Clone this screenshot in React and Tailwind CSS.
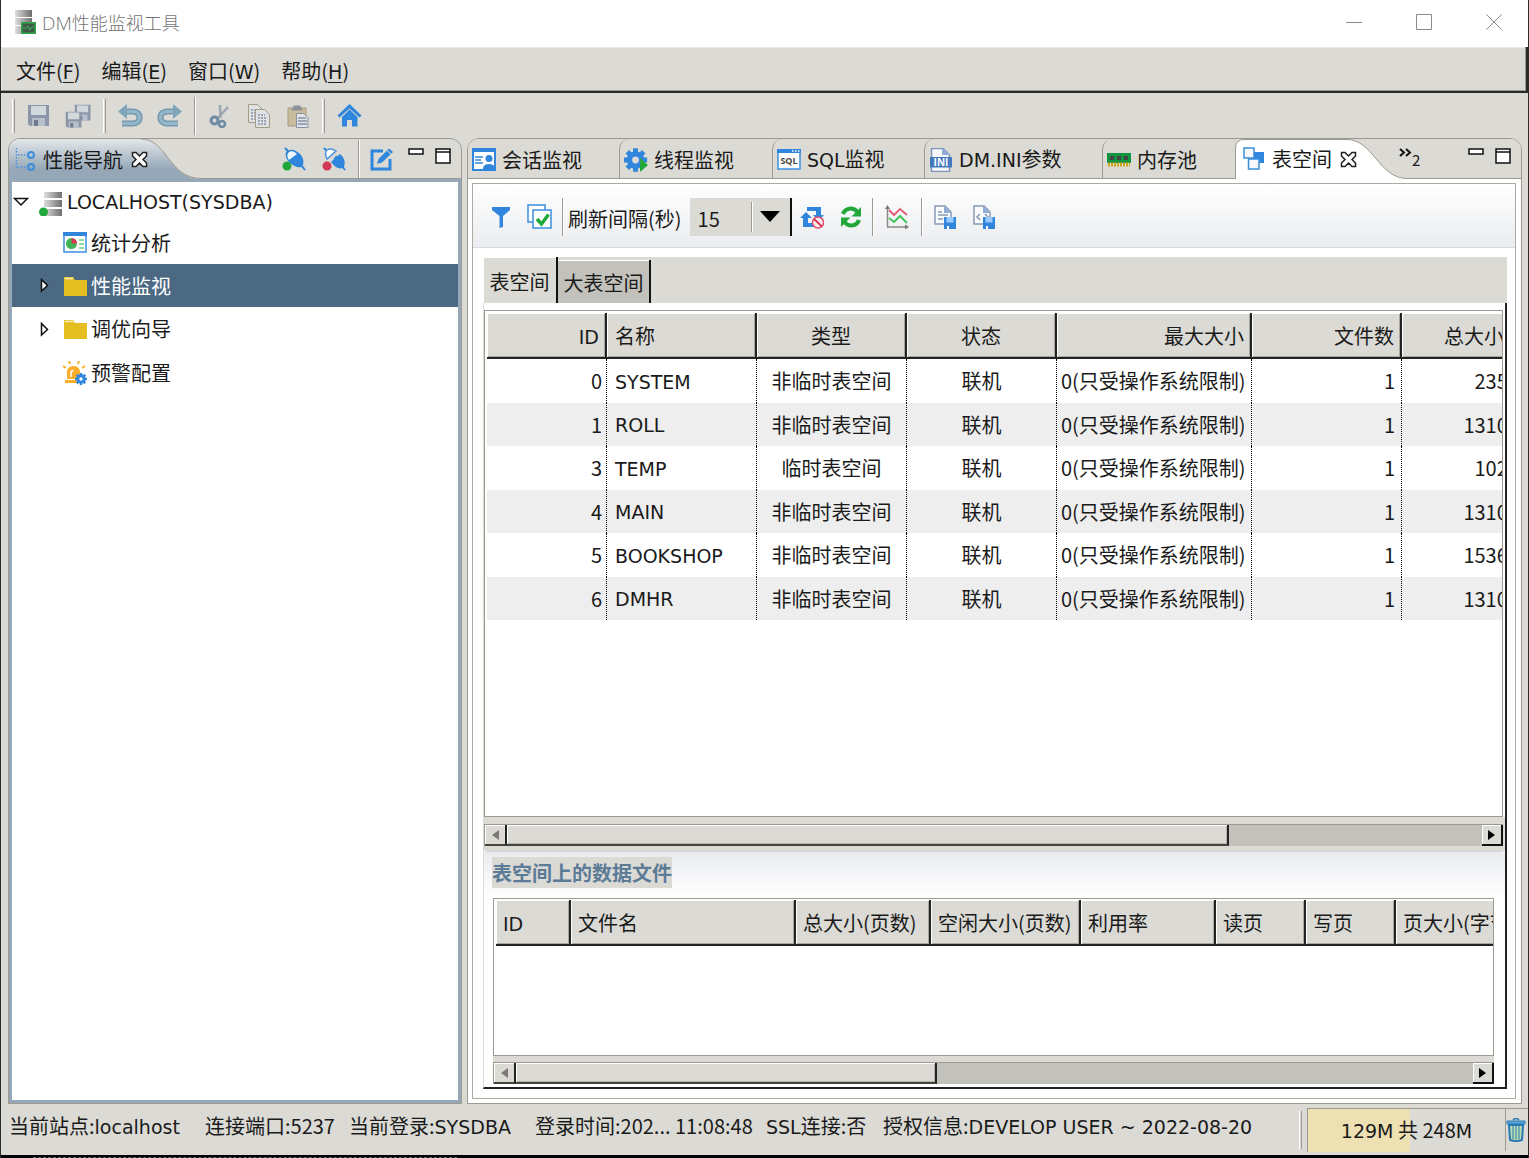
import React from "react";

const L = ({ children }) => (
  <span className="font-['DejaVu_Sans',sans-serif] text-[19px]">{children}</span>
);

const Svg = ({ w = 24, h = 24, children }) => (
  <svg width={w} height={h} viewBox={`0 0 ${w} ${h}`} fill="none" className="block shrink-0" aria-hidden="true">
    {children}
  </svg>
);

/* ---------- application icons ---------- */
const AppIcon = () => (
  <Svg>
    <defs>
      <linearGradient id="srv" x1="0" x2="1">
        <stop offset="0" stopColor="#dedede" />
        <stop offset="1" stopColor="#6e6e6e" />
      </linearGradient>
    </defs>
    <path d="M1 0H18V7H1zM1 8H18V15H1zM1 16H18V24H1z" fill="url(#srv)" />
    <path d="M7 12H22V24H7z" fill="#2fa84a" />
    <path d="M8.500 13.500H20.500V22.500H8.500z" fill="#3f5a46" />
    <path d="M9 18h3l2-2 2 4 2-3h2" stroke="#3dbb5b" />
  </Svg>
);
const Server = () => (
  <Svg>
    <path d="M5 0H23V6H5zM5 8H23V15H5zM5 17H23V24H5z" fill="url(#srv)" />
    <circle cx="4.500" cy="20" r="4.500" fill="#22a83a" />
  </Svg>
);
const Floppy = ({ x = 0, y = 0, s = 1 }) => (
  <g transform={`translate(${x} ${y}) scale(${s})`}>
    <path d="M1 1H22V22H3L1 20z" fill="#8b97a8" />
    <path d="M4 2H19V11H4z" fill="#d3d8dc" />
    <path d="M5 14H18V22H5z" fill="#b6bfca" />
    <path d="M7 16H11V22H7z" fill="#6d7a90" />
  </g>
);
const Save = () => <Svg><Floppy /></Svg>;
const SaveAll = () => (
  <Svg w={26}>
    <Floppy x={9} y={0} s={0.75} />
    <Floppy x={0} y={7} s={0.75} />
  </Svg>
);
const UndoShape = () => (
  <>
    <path d="M7 7.500H14C18.500 7.500 21.500 9.500 21.500 13.500C21.500 17.500 18.500 19.500 15 19.500H4" stroke="#6f94ab" strokeWidth="6" />
    <path d="M7 7.500H14C18.500 7.500 21.500 9.500 21.500 13.500C21.500 17.500 18.500 19.500 15 19.500H4" stroke="#94b6c8" strokeWidth="3.500" />
    <path d="M0 7.500L9 0V15z" fill="#7fa4b9" />
  </>
);
const Undo = () => <Svg w={25}><UndoShape /></Svg>;
const Redo = () => (
  <Svg w={25}>
    <g transform="translate(25 0) scale(-1 1)"><UndoShape /></g>
  </Svg>
);
const Cut = () => (
  <Svg>
    <path d="M12 1L12.500 14M20 3L9 15" stroke="#9aa7b2" strokeWidth="2.500" />
    <circle cx="6.500" cy="16.500" r="3.500" stroke="#6f8ba3" strokeWidth="3" />
    <circle cx="14" cy="20" r="3" stroke="#6f8ba3" strokeWidth="2.500" />
  </Svg>
);
const Page = ({ x, y }) => (
  <g transform={`translate(${x} ${y})`}>
    <path d="M.5.5H9.500L14.500 5.500V18.500H.5z" fill="#dfe1e2" stroke="#a39c86" />
    <path d="M3 6h7M3 9h9M3 12h9M3 15h9" stroke="#8793ab" strokeWidth="1.500" strokeDasharray="2 1" />
  </g>
);
const Copy = () => <Svg><Page x={1} y={0} /><Page x={8} y={5} /></Svg>;
const Paste = () => (
  <Svg>
    <path d="M2 4H20V22H2z" fill="#c9bda0" stroke="#a99a7b" />
    <path d="M5 6.500L8 1.500H14L17 6.500z" fill="#8d929b" />
    <path d="M10.500 9.500H18L22 13.500V23.500H10.500z" fill="#e2e3e4" stroke="#8a93a5" />
    <path d="M12 14h8M12 17h9M12 20h9" stroke="#8793ab" strokeWidth="1.500" />
  </Svg>
);
const Home = () => (
  <Svg w={25}>
    <path d="M12.500 0L24.500 11.500L22.500 13.500L12.500 4.500L2.500 13.500L.5 11.500z" fill="#2f86dc" />
    <path d="M12.500 5.500L20.500 13V22.500H15V16H10V22.500H5V13z" fill="#2f86dc" />
  </Svg>
);
const NavIcon = () => (
  <Svg w={22}>
    <path d="M1.500 0V21M3 7H11M3 19H11" stroke="#4a94dc" strokeWidth="1.500" strokeDasharray="1.500 1.500" />
    <circle cx="16" cy="7" r="3" stroke="#3a8ede" strokeWidth="2" />
    <circle cx="16" cy="19" r="3" stroke="#3a8ede" strokeWidth="2" />
  </Svg>
);
const CloseX = () => (
  <Svg w={17} h={17}>
    <path d="M1.500 1.500H5L8.500 5L12 1.500H15.500V5L12 8.500L15.500 12V15.500H12L8.500 12L5 15.500H1.500V12L5 8.500L1.500 5z" fill="#fff" stroke="#222" strokeWidth="1.500" />
  </Svg>
);
const Connect = () => (
  <Svg>
    <path d="M3 1L6 4M20 19L23 23" stroke="#2f86dc" strokeWidth="2" />
    <path d="M4 5C9 1 14 3 19 8C22 12 22 17 20 20C15 21 11 19 7 15C4 12 3 8 4 5z" fill="#2f86dc" />
    <path d="M6 6C9 3 12 4 15 7L7 13C5 11 5 8 6 6z" fill="#eef5fc" />
    <circle cx="5" cy="19" r="4.500" fill="#22a83a" />
  </Svg>
);
const Disconnect = () => (
  <Svg>
    <path d="M2 1L5 4M20 19L23 23" stroke="#2f86dc" strokeWidth="2" />
    <path d="M5 12C3 8 3 5 5 3C8 1 11 2 14 4z" fill="#fff" stroke="#4a94dc" strokeWidth="1.500" />
    <path d="M10 15L18 8C22 11 23 16 21 20C17 22 13 19 10 15zM12 12L15 9" fill="#2f86dc" stroke="#2f86dc" strokeWidth="1.500" />
    <circle cx="5" cy="19" r="4.500" fill="#d43a55" />
  </Svg>
);
const Edit = () => (
  <Svg>
    <path d="M13 4H2V22H20V12" stroke="#2f86dc" strokeWidth="3" />
    <path d="M7 17L8.500 12L19 1.500L23 5L12 15.500z" fill="#2f86dc" />
    <path d="M17 3.500L21 7" stroke="#dbdad5" />
  </Svg>
);
const MinView = () => (
  <Svg w={16} h={8}><path d="M1 1H15V6H1z" fill="#fff" stroke="#111" strokeWidth="1.500" /></Svg>
);
const MaxView = () => (
  <Svg w={16} h={16}>
    <path d="M1 1H15V15H1z" fill="#fff" stroke="#111" strokeWidth="1.500" />
    <path d="M1 4H15" stroke="#111" strokeWidth="1.500" />
  </Svg>
);
const Stats = () => (
  <Svg>
    <path d="M1 2H23V21H1z" fill="#fff" stroke="#3a8ede" strokeWidth="1.500" />
    <path d="M0 1H24V5H0z" fill="#2f86dc" />
    <circle cx="8.500" cy="12.500" r="5.500" fill="#41b455" />
    <path d="M8.500 12.500V7A5.500 5.500 0 0 1 14 12.500z" fill="#d43a55" />
    <path d="M16 9h5M16 13h5M16 17h5" stroke="#90dc9a" strokeWidth="2" />
  </Svg>
);
const Folder = () => (
  <Svg>
    <path d="M1 3H10L12 6H24V22H1z" fill="#e5be22" />
    <path d="M2 4.500H10" stroke="#f8eebc" strokeWidth="1.500" />
  </Svg>
);
const GearShape = ({ x, y, s, fill = "#2f86dc", hole = "#fff" }) => (
  <g transform={`translate(${x} ${y}) scale(${s})`}>
    {[0, 45, 90, 135].map((a) => (
      <path key={a} d="M-2.500 -12H2.500V12H-2.500z" fill={fill} transform={`rotate(${a})`} />
    ))}
    <circle r="9" fill={fill} />
    <circle r="3.500" fill={hole} />
  </g>
);
const Alarm = () => (
  <Svg>
    <path d="M4 18V11C4 3 17 3 17 11V18z" fill="#fbae2c" />
    <path d="M2 19H17V22H2z" fill="#fbae2c" />
    <path d="M8 16V12q0-2.500 2.500-2.500" stroke="#fff" strokeWidth="1.500" />
    <path d="M6 0L7 3M16 0L15 3M0 5L3 7M22 5L19 7" stroke="#fbae2c" strokeWidth="2" />
    <GearShape x={18} y={18} s={0.5} />
  </Svg>
);
const Session = () => (
  <Svg>
    <path d="M1 1H23V22H1z" fill="#fff" stroke="#2f86dc" strokeWidth="2" />
    <path d="M0 0H24V4H0z" fill="#2f86dc" />
    <path d="M3 9h8M3 12h6M3 15h8" stroke="#2f86dc" strokeWidth="1.500" />
    <circle cx="17" cy="10.500" r="3.500" fill="#2f86dc" />
    <path d="M11 23V20Q12 16 17 16T23 20V23z" fill="#2f86dc" />
  </Svg>
);
const Thread = () => (
  <Svg>
    <GearShape x={11.5} y={12} s={0.97} hole="#dbdad5" />
    <path d="M16 10V24L24 17z" fill="#22a83a" />
  </Svg>
);
const SqlIcon = () => (
  <Svg>
    <path d="M1 2H23V21H1z" fill="#fff" stroke="#3a8ede" strokeWidth="1.500" />
    <path d="M0 1H24V5H0z" fill="#2f86dc" />
    <path d="M15 3h1.500M18 3h1.500M21 3h1.500" stroke="#fff" strokeWidth="1.500" />
    <text x="12" y="16" textAnchor="middle" fontSize="9" fontWeight="700" fontFamily="Open Sans" fill="#444">SQL</text>
  </Svg>
);
const IniIcon = () => (
  <Svg>
    <path d="M2.500 .5H14L20.500 7V23.500H2.500z" fill="#f6f8fa" stroke="#7d93b8" strokeWidth="1.500" />
    <path d="M13 0V7H21z" fill="#8fadd8" />
    <path d="M1 9H23V19.500H1z" fill="#437abf" />
    <text x="12" y="18" textAnchor="middle" fontSize="10" fontWeight="700" fontFamily="Open Sans" fill="#fff">INI</text>
  </Svg>
);
const Memory = () => (
  <Svg>
    <path d="M0 5H24V15H0z" fill="#0f9440" />
    <path d="M3 8h4v4H3zM10 8h4v4h-4zM17 8h4v4h-4z" fill="#444" />
    <path d="M1 16.500H23" stroke="#c9a51c" strokeWidth="4" strokeDasharray="2 1" />
  </Svg>
);
const Tablespace = () => (
  <Svg w={22}>
    <path d="M10 5H21V16H10z" fill="#2f86dc" />
    <path d="M1 1H11V11H1z" fill="#f6f8fb" stroke="#3a8ede" strokeWidth="1.500" />
    <path d="M5.500 12H16V22H5.500z" fill="#f6f8fb" stroke="#3a8ede" strokeWidth="1.500" />
  </Svg>
);
const Filter = () => (
  <Svg w={20}><path d="M1 2H19V5L12 11V22L8.500 23V11L1 5z" fill="#2f86dc" /></Svg>
);
const CheckAll = () => (
  <Svg w={25} h={25}>
    <path d="M1 1H18V18H1z" fill="#fff" stroke="#3a8ede" strokeWidth="1.500" />
    <path d="M6 6H24V24H6z" fill="#fff" stroke="#3a8ede" strokeWidth="1.500" />
    <path d="M10 15L14.500 20L21.500 10.500" stroke="#22a83a" strokeWidth="3.500" />
  </Svg>
);
const NoRefresh = () => (
  <Svg>
    <path d="M7 2H21V10H24L18.500 16L13 10H16V6H7zM6 7L12 13H8V18H14V22H3V13H0z" fill="#2f86dc" />
    <circle cx="18" cy="17.500" r="5.500" fill="#fbeef0" stroke="#e0506c" strokeWidth="1.500" />
    <path d="M14 14L22 21.500" stroke="#d43a55" strokeWidth="2" />
  </Svg>
);
const Refresh = () => (
  <Svg w={22}>
    <path d="M3 9C5 3 13 1.500 17.500 7" stroke="#22a83a" strokeWidth="4" />
    <path d="M21 2V11.500H11.500z" fill="#22a83a" />
    <path d="M19 15C17 21 9 22.500 4.500 17" stroke="#22a83a" strokeWidth="4" />
    <path d="M1 22V12.500H10.500z" fill="#22a83a" />
  </Svg>
);
const Chart = () => (
  <Svg w={25}>
    <path d="M2.500 2V22H22" stroke="#8a8a8a" strokeWidth="1.500" />
    <path d="M2.500 0L5 4H0zM24 22L20 19.500V24.500z" fill="#777" />
    <path d="M4 5L9 10L15 4L22 10" stroke="#e0607a" strokeWidth="2" />
    <path d="M4 13L9 17L15 11L22 18" stroke="#41c45c" strokeWidth="2" />
  </Svg>
);
const SaveDoc = ({ code }) => (
  <Svg>
    <path d="M2 1H12L18 7V19H2z" fill="#fafbfd" stroke="#8799b4" strokeWidth="1.500" />
    <path d="M11 1V8H18z" fill="#8fadd8" />
    {code ? (
      <path d="M8 9L5 12L8 15M13 9L16 12L13 15" stroke="#8799b4" strokeWidth="1.500" />
    ) : (
      <path d="M5 7H9M5 10H15M5 14H10" stroke="#8799b4" strokeWidth="1.500" />
    )}
    <path d="M11 12H23V24H11z" fill="#2f86dc" />
    <path d="M13.500 12H20.500V17.500H13.500z" fill="#9ccbff" />
    <path d="M14 21H16V24H14z" fill="#fff" />
  </Svg>
);
const Trash = () => (
  <Svg w={20}>
    <path d="M7 2Q10 -1 13 2" stroke="#2a78b4" strokeWidth="1.500" />
    <path d="M1 3H19V6H1z" fill="#5ba9dc" stroke="#2a78b4" />
    <path d="M3 7H17L16 22Q10 24 4 22z" fill="#b9dcb0" stroke="#2a78b4" strokeWidth="2" />
    <path d="M7 8V21M10 8V21M13 8V21" stroke="#2a78b4" strokeWidth="1" />
  </Svg>
);

/* ---------- small building blocks ---------- */
const IconButton = ({ label, children }) => (
  <button type="button" aria-label={label} title={label} className="flex items-center justify-center">{children}</button>
);
const Grip = () => <span className="h-[34px] w-[3px] shrink-0 border-l border-r border-l-white border-r-[#9c9990] bg-[#dbdad5]" />;
const Etched = () => <span className="h-[38px] w-[2px] shrink-0 border-l border-r border-l-[#9c9990] border-r-white" />;

const ScrollBar = ({ label, thumb }) => (
  <div role="scrollbar" aria-label={label} aria-orientation="horizontal" aria-controls="grid" aria-valuenow={0} className="flex h-[22px] border-l border-t border-[#9c9990] bg-[#c3c1bb]">
    <button type="button" aria-label="向左滚动" className="flex w-[22px] shrink-0 items-center justify-center border-b-2 border-r-2 border-b-[#45443f] border-r-[#222] bg-[#dbdad5] shadow-[inset_1px_1px_0_#fff]">
      <Svg w={7} h={10}><path d="M7 0V10L0 5z" fill="#7c7a75" /></Svg>
    </button>
    <div className="min-w-0 flex-1">
      <div className="h-full border-b-2 border-r-2 border-b-[#45443f] border-r-[#222] bg-[#dbdad5] shadow-[inset_1px_1px_0_#fff,inset_-1px_-1px_0_#b5b1a8]" style={{ width: thumb }} />
    </div>
    <button type="button" aria-label="向右滚动" className="flex w-[21px] shrink-0 items-center justify-center border-b-2 border-r-2 border-[#111] bg-[#dbdad5] shadow-[inset_1px_1px_0_#fff]">
      <Svg w={7} h={10}><path d="M0 0V10L7 5z" fill="#000" /></Svg>
    </button>
  </div>
);

const TH = "h-[46px] overflow-hidden whitespace-nowrap border-b-2 border-r-2 border-[#222] bg-[#dbdad5] p-0 pt-0.5 font-normal shadow-[inset_1px_1px_0_#fff,inset_-1px_-1px_0_#a9a69e]";
const TD = "overflow-hidden whitespace-nowrap border-r border-dotted border-black p-0";

const spaces = [
  ["0", "SYSTEM", "非临时表空间", "23552"],
  ["1", "ROLL", "非临时表空间", "131072"],
  ["3", "TEMP", "临时表空间", "10240"],
  ["4", "MAIN", "非临时表空间", "131072"],
  ["5", "BOOKSHOP", "非临时表空间", "153600"],
  ["6", "DMHR", "非临时表空间", "131072"],
];

const SpaceTable = () => (
  <table id="grid" className="w-[1050px] table-fixed border-separate border-spacing-0">
    <colgroup>
      <col className="w-[120px]" />
      <col className="w-[150px]" />
      <col className="w-[150px]" />
      <col className="w-[150px]" />
      <col className="w-[195px]" />
      <col className="w-[150px]" />
      <col className="w-[135px]" />
    </colgroup>
    <thead>
      <tr>
        <th className={TH + " pr-1.5 text-right"}><L>ID</L></th>
        <th className={TH + " pl-2 text-left"}>名称</th>
        <th className={TH + " text-center"}>类型</th>
        <th className={TH + " text-center"}>状态</th>
        <th className={TH + " pr-1.5 text-right"}>最大大小</th>
        <th className={TH + " pr-1.5 text-right"}>文件数</th>
        <th className={TH + " pl-[42px] text-left"}>总大小</th>
      </tr>
    </thead>
    <tbody>
      {spaces.map(([id, name, type, size]) => (
        <tr key={id} className="h-[43px] odd:h-[44px] even:bg-[#eeeeee]">
          <td className={TD + " pr-1 text-right"}>{id}</td>
          <td className={TD + " pl-2"}><L>{name}</L></td>
          <td className={TD + " text-center"}>{type}</td>
          <td className={TD + " text-center"}>联机</td>
          <td className={TD + " pl-1"}>0(只受操作系统限制)</td>
          <td className={TD + " pr-1.5 text-right"}>1</td>
          <td className={TD + " pr-1.5 text-right"}>{size}</td>
        </tr>
      ))}
    </tbody>
  </table>
);

const FileTable = () => (
  <table className="w-[1034px] table-fixed border-separate border-spacing-0">
    <colgroup>
      <col className="w-[75px]" />
      <col className="w-[225px]" />
      <col className="w-[135px]" />
      <col className="w-[150px]" />
      <col className="w-[135px]" />
      <col className="w-[90px]" />
      <col className="w-[90px]" />
      <col className="w-[134px]" />
    </colgroup>
    <thead>
      <tr>
        <th className={TH + " pl-[7px] text-left"}><L>ID</L></th>
        {["文件名", "总大小(页数)", "空闲大小(页数)", "利用率", "读页", "写页", "页大小(字节)"].map((t) => (
          <th key={t} className={TH + " pl-[7px] text-left"}>{t}</th>
        ))}
      </tr>
    </thead>
  </table>
);

const Tab = ({ icon, width, first, children }) => (
  <button type="button" role="tab" className={`flex h-full shrink-0 items-center gap-1.5 whitespace-nowrap pl-1 pt-0.5 ${first ? "" : "rounded-tl-[10px] border-l border-[#9c9990]"} ${width}`}>
    {icon}
    <span>{children}</span>
  </button>
);

const TreeRow = ({ icon, arrow, selected, children }) => (
  <li role="treeitem" aria-selected={!!selected} className={`flex h-[43px] items-center pl-7 nth-[n+4]:h-[44px] ${selected ? "bg-[#4b6983] text-white" : ""}`}>
    <span className="flex w-[23px] shrink-0">
      {arrow && (
        <Svg w={9} h={15}><path d="M1.500 1.500V13L7.500 7.500z" fill="#fff" stroke="#111" strokeWidth="1.500" /></Svg>
      )}
    </span>
    {icon}
    <span className="pl-1">{children}</span>
  </li>
);

const NavView = () => (
  <section className="flex w-[454px] shrink-0 flex-col overflow-hidden rounded-t-[12px] border border-[#9c9990] bg-[#96a8b8]">
    <header className="flex h-[40px] shrink-0 bg-[#dbdad5]">
      <div className="relative flex h-full w-[192px] items-center">
        <svg className="absolute inset-0 h-full w-full" viewBox="0 0 192 40" preserveAspectRatio="none" aria-hidden="true">
          <defs>
            <linearGradient id="tabfill" x1="0" y1="0" x2="0" y2="1">
              <stop offset="0" stopColor="#e3e7ea" />
              <stop offset="0.75" stopColor="#96a8b8" />
            </linearGradient>
          </defs>
          <path d="M0 0H132C158 0 160 40 192 40H0z" fill="url(#tabfill)" />
          <path d="M132 0C158 0 160 39.500 192 39.500" fill="none" stroke="#9c9990" />
        </svg>
        <h2 className="relative flex items-center gap-1.5 pl-1.5 pt-0.5"><NavIcon />性能导航</h2>
        <button type="button" aria-label="关闭" className="relative ml-2"><CloseX /></button>
      </div>
      <div className="flex flex-1 items-center justify-end gap-3 border-b border-[#9c9990] pr-[10px]">
        <div className="flex items-center gap-4">
          <IconButton label="连接"><Connect /></IconButton>
          <IconButton label="断开"><Disconnect /></IconButton>
        </div>
        <div className="flex items-center gap-2.5">
          <Etched />
          <IconButton label="编辑"><Edit /></IconButton>
        </div>
        <div className="flex items-start gap-[11px] self-start pl-0.5 pt-[9px]">
          <IconButton label="最小化"><MinView /></IconButton>
          <IconButton label="最大化"><MaxView /></IconButton>
        </div>
      </div>
    </header>
    <ul role="tree" className="m-[3px] flex-1 bg-white">
      <li role="treeitem" aria-expanded="true" className="flex h-[39px] items-center pl-px">
        <Svg w={16} h={10}><path d="M1.500 1.500H14.500L8 8z" fill="#fff" stroke="#111" strokeWidth="1.500" /></Svg>
        <span className="pl-2.5 pt-1"><Server /></span>
        <span className="pl-1"><L>LOCALHOST(SYSDBA)</L></span>
      </li>
      <TreeRow icon={<Stats />}>统计分析</TreeRow>
      <TreeRow icon={<Folder />} arrow selected>性能监视</TreeRow>
      <TreeRow icon={<Folder />} arrow>调优向导</TreeRow>
      <TreeRow icon={<Alarm />}>预警配置</TreeRow>
    </ul>
  </section>
);

const EditorTabs = () => (
  <header role="tablist" className="flex h-[40px] shrink-0 border-b border-[#9c9990] bg-[#dbdad5]">
    <Tab first icon={<Session />} width="w-[151px]">会话监视</Tab>
    <Tab icon={<Thread />} width="w-[153px]">线程监视</Tab>
    <Tab icon={<SqlIcon />} width="w-[152px]"><L>SQL</L>监视</Tab>
    <Tab icon={<IniIcon />} width="w-[178px]"><L>DM.INI</L>参数</Tab>
    <Tab icon={<Memory />} width="w-[133px]">内存池</Tab>
    <div className="relative flex h-[40px] w-[172px] shrink-0 items-center">
      <svg className="absolute inset-0 h-full w-full" viewBox="0 0 172 40" preserveAspectRatio="none" aria-hidden="true">
        <path d="M.5 40V9Q.5 .5 9 .5H112C138 .5 144 39.500 172 39.500V40z" fill="#fff" />
        <path d="M.5 40V9Q.5 .5 9 .5H112C138 .5 144 39.500 172 39.500" fill="none" stroke="#9c9990" />
      </svg>
      <button type="button" role="tab" aria-selected="true" className="relative flex items-center gap-[7px] pl-2"><Tablespace />表空间</button>
      <button type="button" aria-label="关闭" className="relative ml-2"><CloseX /></button>
    </div>
    <div className="flex min-w-0 flex-1 items-start justify-between pr-[10px] pt-[9px]">
      <button type="button" aria-label="更多" className="-ml-2 flex">
        <Svg w={13} h={10}><path d="M1 1L5 4.500L1 8M7 1L11 4.500L7 8" stroke="#111" strokeWidth="2" /></Svg>
        <span className="pt-1 text-[15px] leading-[16px]">2</span>
      </button>
      <div className="flex items-start gap-[11px]">
        <IconButton label="最小化"><MinView /></IconButton>
        <IconButton label="最大化"><MaxView /></IconButton>
      </div>
    </div>
  </header>
);

const EditorToolbar = () => (
  <div className="flex h-[64px] shrink-0 items-center border-b border-[#d3dbe4] bg-linear-to-b from-white to-[#eaecef] pl-[18px] pt-0.5">
    <IconButton label="过滤"><Filter /></IconButton>
    <span className="w-4" />
    <IconButton label="全选"><CheckAll /></IconButton>
    <span className="w-2.5" />
    <Etched />
    <label htmlFor="interval" className="whitespace-nowrap pl-1 pt-1">刷新间隔(秒)</label>
    <div className="relative ml-2 h-[38px] w-[102px]">
      <select id="interval" defaultValue="15" className="h-full w-full appearance-none rounded-none border-r-2 border-[#111] bg-[#dbdad5] pl-2 pt-1">
        <option>15</option>
        <option>30</option>
        <option>60</option>
      </select>
      <span className="pointer-events-none absolute inset-y-1 right-3 flex items-center border-l border-[#9c9990] pl-2 shadow-[inset_1px_0_0_#fff]">
        <Svg w={20} h={11}><path d="M0 0H20L10 11z" fill="#000" /></Svg>
      </span>
    </div>
    <div className="flex items-center gap-4 pl-2">
      <IconButton label="停止刷新"><NoRefresh /></IconButton>
      <IconButton label="刷新"><Refresh /></IconButton>
    </div>
    <div className="flex items-center gap-[11px] pl-2.5">
      <Etched />
      <IconButton label="图表"><Chart /></IconButton>
      <Etched />
    </div>
    <div className="flex items-center gap-[15px] pl-2.5">
      <IconButton label="导出文本"><SaveDoc /></IconButton>
      <IconButton label="导出代码"><SaveDoc code /></IconButton>
    </div>
  </div>
);

const EditorView = () => (
  <section className="flex min-w-0 flex-1 flex-col overflow-hidden rounded-t-[12px] border border-[#9c9990] bg-white">
    <EditorTabs />
    <div className="m-[4px] mr-[5px] flex min-h-0 flex-1 flex-col border border-[#aeaaa2]">
      <EditorToolbar />
      <div className="flex min-h-0 flex-1 flex-col pb-[9px] pl-[10px] pr-[8px] pt-[9px]">
        <div role="tablist" className="flex h-[46px] shrink-0 items-end bg-[#dbdad5]">
          <button type="button" role="tab" aria-selected="true" className="h-full w-[75px] border-r-2 border-[#111] pt-1 shadow-[inset_1px_1px_0_#fff]">表空间</button>
          <button type="button" role="tab" className="h-[43px] w-[93px] border-r-2 border-[#111] bg-[#c3c1bb] pt-0.5 shadow-[inset_0_1px_0_#fff]">大表空间</button>
        </div>
        <div className="flex min-h-0 flex-1 flex-col border-b-2 border-l border-r-2 border-b-[#222] border-l-[#dbdad5] border-r-[#222] pt-[7px]">
          <div className="mr-[2px] min-h-0 flex-1 overflow-hidden border border-[#9c9990] pl-[2px] pt-[2px]">
            <SpaceTable />
          </div>
          <div className="bg-[#dbdad5] pb-[5px] pr-[2px] pt-[7px]">
            <ScrollBar label="表空间列表滚动条" thumb="74%" />
          </div>
          <div className="flex shrink-0 flex-col rounded-t-[4px] border-t border-[#cbd4de] bg-white">
            <div className="h-[46px] bg-linear-to-b from-[#eaecf0] to-white pl-2 pt-[5px]">
              <h3 className="inline-block bg-[#dbdad5] font-bold leading-[31px] text-[#5b7b97]">表空间上的数据文件</h3>
            </div>
            <div className="ml-[9px] mr-[11px]">
              <div className="h-[158px] overflow-hidden border border-[#9c9990] pl-[2px] pt-px">
                <FileTable />
              </div>
              <div className="bg-[#dbdad5] pt-[6px]">
                <ScrollBar label="数据文件滚动条" thumb="44%" />
              </div>
            </div>
            <div className="h-[3px]" />
          </div>
        </div>
      </div>
    </div>
  </section>
);

const Menu = ({ name, k }) => (
  <button type="button" className="whitespace-nowrap">{name}(<span className="font-['DejaVu_Sans',sans-serif] text-[19px] underline underline-offset-3">{k}</span>)</button>
);

export default function App() {
  return (
    <div className="flex h-screen min-h-[900px] flex-col overflow-hidden border-x border-[#2b2b2b] bg-[#dbdad5] font-['Noto_Sans_CJK_SC',sans-serif] text-[20px] leading-[24px] text-[#1a1a1a]">
      <header className="flex h-[47px] shrink-0 items-center justify-between bg-white pb-[3px] pl-[13px] pr-[26px]">
        <div className="flex items-center gap-1">
          <AppIcon />
          <h1 className="text-[18px] font-light text-[#737373]"><span className="font-['Open_Sans',sans-serif] text-[19px]">DM</span>性能监视工具</h1>
        </div>
        <div className="flex items-center gap-[54px] text-[#8a8a8a]">
          <IconButton label="最小化"><Svg w={16} h={16}><path d="M0 8.500H16" stroke="currentColor" /></Svg></IconButton>
          <IconButton label="最大化"><Svg w={16} h={16}><path d="M.5 .5H15.500V15.500H.5z" stroke="currentColor" /></Svg></IconButton>
          <IconButton label="关闭"><Svg w={16} h={16}><path d="M.5 .5L15.500 15.500M15.500 .5L.5 15.500" stroke="currentColor" /></Svg></IconButton>
        </div>
      </header>
      <nav className="flex h-[46px] shrink-0 items-center gap-[21px] border-b-2 border-r-2 border-[#2a2a28] pl-[15px] pt-1 shadow-[inset_0_-1px_0_#9c9990,inset_-1px_0_0_#9c9990,inset_1px_1px_0_#eceae6]">
        <Menu name="文件" k="F" />
        <Menu name="编辑" k="E" />
        <Menu name="窗口" k="W" />
        <Menu name="帮助" k="H" />
      </nav>
      <div className="flex h-[45px] shrink-0 items-center gap-3 pl-[11px]">
        <Grip />
        <div className="flex items-center gap-[14px]">
          <IconButton label="保存"><Save /></IconButton>
          <IconButton label="全部保存"><SaveAll /></IconButton>
        </div>
        <Grip />
        <div className="flex items-center gap-[14px]">
          <IconButton label="撤销"><Undo /></IconButton>
          <IconButton label="重做"><Redo /></IconButton>
        </div>
        <Etched />
        <div className="flex items-center gap-[15px]">
          <IconButton label="剪切"><Cut /></IconButton>
          <IconButton label="复制"><Copy /></IconButton>
          <IconButton label="粘贴"><Paste /></IconButton>
        </div>
        <Grip />
        <IconButton label="主页"><Home /></IconButton>
      </div>
      <main className="flex min-h-0 flex-1 gap-[5px] pl-[7px] pr-[6px]">
        <NavView />
        <EditorView />
      </main>
      <footer className="flex h-[51px] shrink-0 items-stretch whitespace-nowrap pl-2">
        <div className="flex min-w-0 flex-1 items-baseline pt-[10px]">
          <span className="w-[196px] shrink-0">当前站点:<L>localhost</L></span>
          <span className="w-[144px] shrink-0">连接端口:5237</span>
          <span className="w-[186px] shrink-0">当前登录:<L>SYSDBA</L></span>
          <span className="w-[231px] shrink-0">登录时间:202... 11:08:48</span>
          <span className="w-[117px] shrink-0"><L>SSL</L>连接:否</span>
          <span>授权信息:<L>DEVELOP USER ~ 2022-08-20</L></span>
        </div>
        <div className="flex items-center gap-[5px]">
          <span className="h-[38px] w-[3px] border-l border-r border-l-white border-r-[#9c9990]" />
          <div className="flex h-[44px] w-[198px] items-center justify-center border-l border-t border-[#9c9990] bg-linear-to-r from-[#ede0b2] from-52% to-[#dbdad5] to-52%">
            <span><L>129M</L> 共 248<L>M</L></span>
          </div>
        </div>
        <div className="my-1 flex items-center border-l border-t border-[#9c9990] pr-0.5">
          <IconButton label="垃圾回收"><Trash /></IconButton>
        </div>
      </footer>
      <div className="h-[3px] shrink-0 border-l-[32px] border-black bg-black">
        <div className="h-full w-[424px] border-b border-dashed border-[#666]" />
      </div>
    </div>
  );
}
